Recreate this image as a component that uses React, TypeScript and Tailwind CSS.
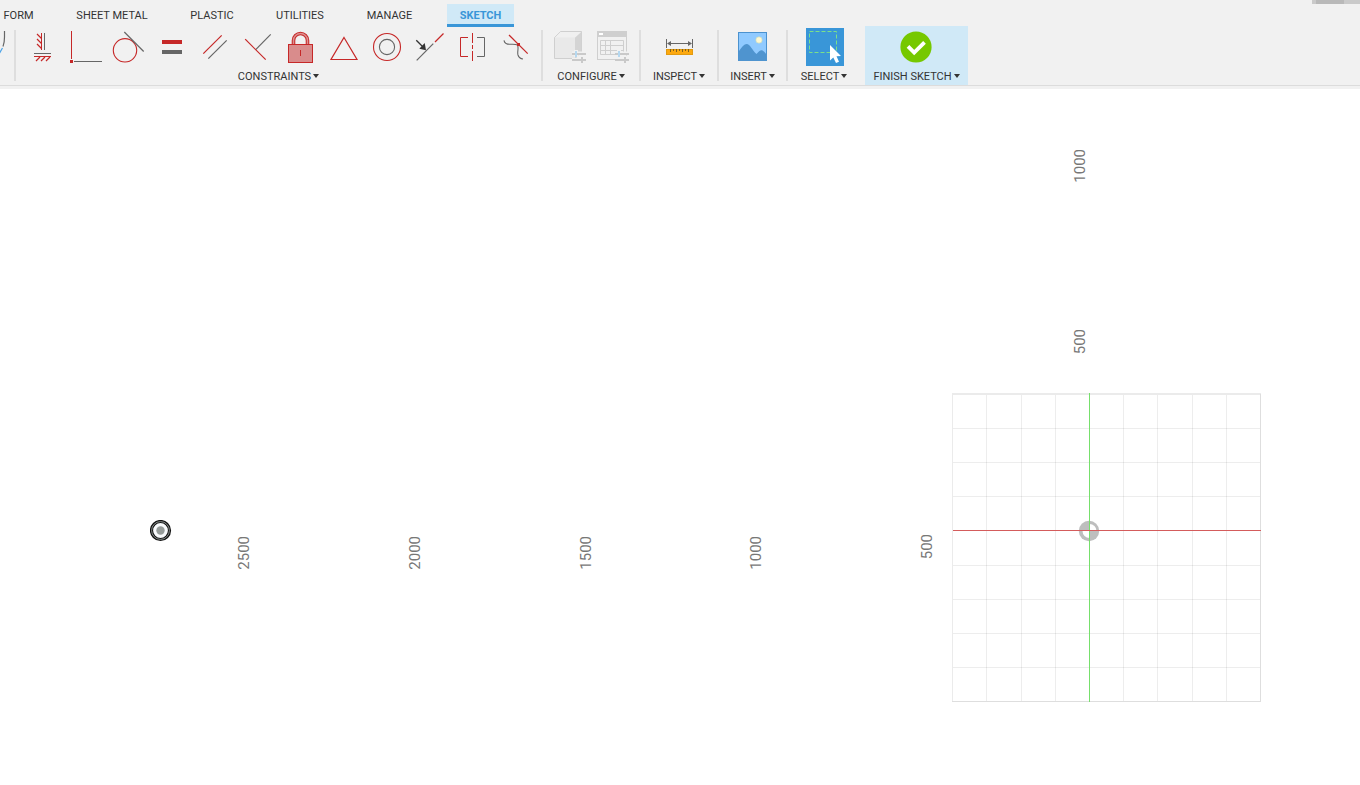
import type { ReactNode } from "react";

const RED = "#c62828";
const GRAY = "#666666";

type Tool = { name: string; viewBox: string; art: ReactNode };

const constraints: Tool[] = [
  {
    name: "Horizontal/Vertical",
    viewBox: "21 28 43 38",
    art: (
      <>
        <path d="M41.5 33V50M34 56.5H51" stroke={RED} />
        <path d="M37 34l4.500 4.500M37 39l4.500 4.500M37 44l4.500 4.500M40 57l-4 4M45 57l-4 4M50 57l-4 4" stroke={RED} strokeWidth="1.200" />
        <path d="M44.500 33V50M34 53.500H51" stroke={GRAY} />
      </>
    ),
  },
  {
    name: "Coincident",
    viewBox: "64 28 43 38",
    art: (
      <>
        <path d="M71.500 31V59" stroke={RED} />
        <rect x="70" y="60" width="3" height="3" fill={RED} />
        <path d="M74 61.500H102" stroke={GRAY} />
      </>
    ),
  },
  {
    name: "Tangent",
    viewBox: "107 28 43 38",
    art: (
      <>
        <circle cx="125" cy="50.300" r="11.700" stroke={RED} strokeWidth="1.100" />
        <path d="M124.300 32L143.700 51.500" stroke={GRAY} strokeWidth="1.200" />
      </>
    ),
  },
  {
    name: "Equal",
    viewBox: "150 28 43 38",
    art: (
      <>
        <rect x="162" y="40" width="20" height="4" fill={RED} />
        <rect x="162" y="50" width="20" height="4" fill={GRAY} />
      </>
    ),
  },
  {
    name: "Parallel",
    viewBox: "193 28 43 38",
    art: (
      <>
        <path d="M203.300 53.700L221.700 35.300" stroke={RED} strokeWidth="1.200" />
        <path d="M208.300 58.700L226.700 40.300" stroke={GRAY} strokeWidth="1.200" />
      </>
    ),
  },
  {
    name: "Perpendicular",
    viewBox: "236 28 43 38",
    art: (
      <>
        <path d="M255.700 49.700L270.700 34.300" stroke={GRAY} strokeWidth="1.200" />
        <path d="M245.200 39.200L265.700 59.700" stroke={RED} strokeWidth="1.200" />
      </>
    ),
  },
  {
    name: "Fix/Unfix",
    viewBox: "279 28 43 38",
    art: (
      <>
        <path d="M293.500 44.500V40.500a7 7 0 0 1 14 0V44.500" stroke={RED} strokeWidth="3.600" />
        <path d="M293.500 44.500V40.500a7 7 0 0 1 14 0V44.500" stroke="#dd8f8f" strokeWidth="1.500" />
        <rect x="288.500" y="44.500" width="24" height="18" fill="#d98c8c" stroke={RED} />
        <path d="M300.500 50V56" stroke={RED} />
      </>
    ),
  },
  {
    name: "Midpoint",
    viewBox: "322 28 43 38",
    art: <path d="M344 37.500L357 59.500H331Z" stroke={RED} strokeWidth="1.200" />,
  },
  {
    name: "Concentric",
    viewBox: "365 28 43 38",
    art: (
      <>
        <circle cx="387" cy="47" r="13.500" stroke={RED} strokeWidth="1.100" />
        <circle cx="387" cy="47" r="7.600" stroke={GRAY} strokeWidth="1.100" />
      </>
    ),
  },
  {
    name: "Collinear",
    viewBox: "408 28 43 38",
    art: (
      <>
        <path d="M416.700 60.300L433.300 43.700" stroke={GRAY} strokeWidth="1.200" />
        <path d="M435 42L443.500 33.500" stroke={RED} strokeWidth="1.200" />
        <path d="M416.300 40.300L423 47" stroke="#333" strokeWidth="1.300" />
        <path d="M426 50.300L424.700 43L419.300 48.700Z" fill="#333" />
      </>
    ),
  },
  {
    name: "Symmetry",
    viewBox: "451 28 43 38",
    art: (
      <>
        <path d="M468 37.500H460.500V56.500H468" stroke={RED} />
        <path d="M472.500 33V43M472.500 45V49M472.500 51V61" stroke={RED} />
        <path d="M477 37.500H484.500V56.500H477" stroke={GRAY} />
      </>
    ),
  },
  {
    name: "Curvature",
    viewBox: "494 28 43 38",
    art: (
      <>
        <path d="M504 40.300C504.500 43.500 507 44.300 510 44.300S515.500 44 517.500 45C519 48.500 517 51.500 518 55C518.800 57.500 520.500 58.700 523 59" stroke={GRAY} strokeWidth="1.100" />
        <path d="M509 35L527.700 53.700" stroke={RED} strokeWidth="1.200" />
        <rect x="517" y="43" width="3" height="3" fill={RED} />
      </>
    ),
  },
];

function Sliders({ x }: { x: number }) {
  return (
    <g transform={`translate(${x} 0)`}>
      <path d="M0 53.500H14M0 60H14M4 50V57M10 56V63" stroke="#f1f1f1" strokeWidth="4" />
      <path d="M0 54H14M0 60H14" stroke="#c9c9c9" strokeWidth="2" />
      <path d="M10 57V63" stroke="#c9c9c9" strokeWidth="2" />
      <path d="M4 51V57" stroke="#b5d8f0" strokeWidth="2" />
    </g>
  );
}

const configure: Tool[] = [
  {
    name: "Configure body",
    viewBox: "548 28 43 38",
    art: (
      <>
        <path d="M554.500 37.500L560.500 31.500H581.500V52L575 58.500H554.500Z" fill="#e9e9e9" stroke="#cfcfcf" />
        <path d="M575 37.500L581.500 31.500V52L575 58.500Z" fill="#d4d4d4" />
        <path d="M555 37.500L560.500 32H581L575 37.500Z" fill="#f0f0f0" />
        <Sliders x={572} />
      </>
    ),
  },
  {
    name: "Configuration table",
    viewBox: "591 28 43 38",
    art: (
      <>
        <rect x="597.500" y="31.500" width="29" height="28" fill="#f1f1f1" stroke="#cfcfcf" />
        <rect x="597" y="31" width="30" height="6" fill="#cfcfcf" />
        <rect x="599" y="33" width="4" height="2" fill="#fff" />
        <path d="M600.500 40.500H623.500V54.500H600.500ZM600.500 45.500H623.500M600.500 50.500H623.500M605.500 40.500V54.500M610.500 40.500V54.500" stroke="#cfcfcf" />
        <Sliders x={615} />
      </>
    ),
  },
];

const inspect: Tool[] = [
  {
    name: "Measure",
    viewBox: "658 28 43 38",
    art: (
      <>
        <path d="M666.500 39V48M692.500 39V48M668 43.500H691" stroke={GRAY} />
        <path d="M667 43.500L671 41V46ZM692 43.500L688 41V46Z" fill={GRAY} />
        <rect x="666.500" y="49.500" width="26" height="5" fill="#fda90f" stroke="#e29a10" />
        <path d="M670.500 49V52M673.500 49V51M676.500 49V52M679.500 49V51M682.500 49V52M685.500 49V51M688.500 49V52" stroke="#80601c" />
      </>
    ),
  },
];

const insert: Tool[] = [
  {
    name: "Insert image",
    viewBox: "731 28 43 38",
    art: (
      <>
        <rect x="738.500" y="32.500" width="28" height="28" fill="#90caff" stroke="#4b92cf" />
        <path d="M739 51C742 47 744 44 746.700 44C750 44 752 50 756.500 54C758.500 52 760 50.300 761.500 50.300C763.500 50.300 765 53 767 55V61H738Z" fill="#4f94cf" />
        <circle cx="759" cy="40" r="3.200" fill="#fff8d2" stroke="#bfd6b8" strokeWidth="0.600" />
      </>
    ),
  },
];

const select: Tool[] = [
  {
    name: "Select",
    viewBox: "803 28 43 38",
    art: (
      <>
        <rect x="806" y="28" width="38" height="38" fill="#3996d8" />
        <rect x="809.500" y="31.500" width="27" height="21" stroke="#7be08a" strokeDasharray="4 2" />
        <path d="M830 45V60.500L833.300 57.500L836 63L839 61.700L836.500 56.300L841 56Z" fill="#fff" />
      </>
    ),
  },
];

const finish: Tool[] = [
  {
    name: "Finish sketch",
    viewBox: "895 28 43 38",
    art: (
      <>
        <circle cx="916" cy="47" r="15.600" fill="#76c800" />
        <path d="M908 46.300L914.200 52.500L924.500 42.300" stroke="#fff" strokeWidth="3.800" />
      </>
    ),
  },
];

function Group({ label, tools, className }: { label: string; tools: Tool[]; className: string }) {
  return (
    <section aria-label={label} className={`flex shrink-0 flex-col items-center pt-0.5 ${className}`}>
      <div className="flex">
        {tools.map((t) => (
          <button key={t.name} type="button" aria-label={t.name} className="h-[38px] w-[43px]">
            <svg viewBox={t.viewBox} fill="none" className="block h-[38px] w-[43px]" aria-hidden="true">
              {t.art}
            </svg>
          </button>
        ))}
      </div>
      <button type="button" className="flex h-[19px] items-center gap-0.5 whitespace-nowrap">
        <span className="pt-0.5">{label}</span>
        <svg viewBox="0 0 6 4" className="h-1 w-1.5" aria-hidden="true">
          <path d="M0 0H6L3 4Z" fill="#333" />
        </svg>
      </button>
    </section>
  );
}

function Separator() {
  return <div className="mt-1 h-[51px] w-0.5 shrink-0 bg-[#dedede]" />;
}

const tabs = [
  { name: "FORM", className: "w-[55px]" },
  { name: "SHEET METAL", className: "w-[94px]" },
  { name: "PLASTIC", className: "w-[68px]" },
  { name: "UTILITIES", className: "w-[70px]" },
  { name: "MANAGE", className: "w-[71px]" },
];

const rulerLabels = [
  { text: "1000", className: "left-[1071px] top-[60px]" },
  { text: "500", className: "left-[1071px] top-[240px]" },
  { text: "2500", className: "left-[235px] top-[447px]" },
  { text: "2000", className: "left-[406px] top-[447px]" },
  { text: "1500", className: "left-[577px] top-[447px]" },
  { text: "1000", className: "left-[747px] top-[447px]" },
  { text: "500", className: "left-[918px] top-[445px]" },
];

const columns = [34, 69, 103, 171, 205, 240, 274];
const rows = [35, 69, 103, 172, 206, 240, 274];

function SketchGrid() {
  return (
    <svg viewBox="0 0 309 309" fill="none" shapeRendering="crispEdges" className="absolute left-[952px] top-[304px] h-[309px] w-[309px]" aria-label="Sketch grid">
      {columns.map((x) => (
        <path key={x} d={`M${x + 0.5} 0V309`} stroke="#000" strokeOpacity="0.07" />
      ))}
      {rows.map((y) => (
        <path key={y} d={`M0 ${y + 0.5}H309`} stroke="#000" strokeOpacity="0.07" />
      ))}
      <path d="M0.500 0V309" stroke="#ebebeb" />
      <path d="M0 1H309" stroke="#ebebeb" strokeWidth="2" />
      <path d="M308.500 1V309M0 308.500H309" stroke="#dedede" />
      <g shapeRendering="auto">
        <circle cx="137" cy="138" r="10.200" fill="#bebebe" />
        <path d="M137.500 138V131A7 7 0 0 1 144.500 138ZM137.500 138V145A7 7 0 0 1 130.500 138Z" fill="#fff" />
      </g>
      <path d="M137.500 0V309" stroke="#76df6b" />
      <path d="M1 137.500H309" stroke="#d45c5c" />
    </svg>
  );
}

export default function App() {
  return (
    <div className="flex min-h-screen flex-col overflow-x-hidden bg-white font-[Roboto,'Liberation_Sans',sans-serif] text-[11px] leading-4 text-[#333]">
      <header className="relative bg-[#f1f1f1] pb-[3px]">
        <div className="absolute right-0 top-0 flex h-1 w-12 bg-[#cacaca] pl-1" aria-hidden="true">
          <div className="w-7 bg-[#b9b9b9]" />
        </div>
        <nav aria-label="Workspace tabs" className="-ml-[9px] flex h-[26px] gap-[19px] pt-1">
          {tabs.map((t) => (
            <button key={t.name} type="button" className={`h-6 shrink-0 whitespace-nowrap text-center ${t.className}`}>
              {t.name}
            </button>
          ))}
          <button type="button" aria-current="page" className="ml-[3px] h-[23px] w-[67px] shrink-0 border-b-3 border-[#3996d8] bg-[#d0e9f7] pt-1 text-center font-bold text-[#3996d8]">
            SKETCH
          </button>
        </nav>
        <div role="toolbar" aria-label="Sketch tools" className="flex h-[60px] border-b border-[#dcdcdc]">
          <button type="button" aria-label="Spline" className="h-[38px] w-3.5 shrink-0">
            <svg viewBox="0 26 14 38" fill="none" className="block h-[38px] w-3.5" aria-hidden="true">
              <path d="M4.500 31V37C4.500 41 4 44 3 46.500" stroke={GRAY} strokeWidth="1.200" />
              <path d="M2.500 48L-1 54" stroke="#4aa3e8" strokeWidth="1.200" />
            </svg>
          </button>
          <Separator />
          <Group label="CONSTRAINTS" tools={constraints} className="w-[525px]" />
          <Separator />
          <Group label="CONFIGURE" tools={configure} className="w-24" />
          <Separator />
          <Group label="INSPECT" tools={inspect} className="w-[76px]" />
          <Separator />
          <Group label="INSERT" tools={insert} className="w-[67px]" />
          <Separator />
          <Group label="SELECT" tools={select} className="w-[72px]" />
          <Group label="FINISH SKETCH" tools={finish} className="ml-[5px] w-[103px] bg-[#d0e9f7]" />
        </div>
      </header>
      <main className="relative min-h-[640px] flex-1 overflow-hidden">
        {rulerLabels.map((l) => (
          <span key={l.className} className={`absolute rotate-180 text-[15px] leading-[18px] text-[#777] [writing-mode:vertical-rl] ${l.className}`}>
            {l.text}
          </span>
        ))}
        <SketchGrid />
        <svg viewBox="0 0 22 22" fill="none" className="absolute left-[150px] top-[431px] h-[22px] w-[22px]" aria-label="Sketch point">
          <circle cx="10.500" cy="10.500" r="9" fill="#f8fafc" stroke="#111" strokeWidth="3.200" />
          <circle cx="10.500" cy="10.500" r="8.900" stroke="#8b9290" strokeWidth="1" />
          <circle cx="10.500" cy="10.500" r="4.200" fill="#969c9a" />
        </svg>
      </main>
    </div>
  );
}
